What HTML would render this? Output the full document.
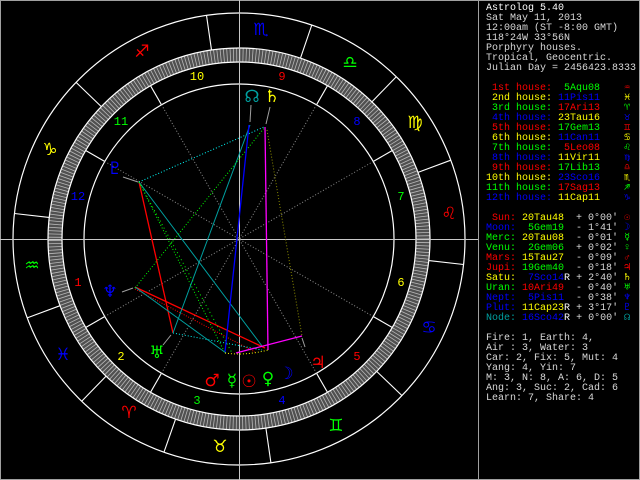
<!DOCTYPE html>
<html><head><meta charset="utf-8"><style>
html,body{margin:0;padding:0;background:#000;}
#w{position:relative;width:640px;height:480px;overflow:hidden;background:#000;}
svg{position:absolute;left:0;top:0;}
pre{position:absolute;left:486px;top:4px;margin:0;font-family:"Liberation Mono","DejaVu Sans Mono",monospace;font-size:10px;line-height:10px;color:#d8d8d8;}
.r{color:#f00}.y{color:#ff0}.g{color:#0f0}.b{color:#00f}.t{color:#00a0a0}.w{color:#fff}
</style></head><body><div id="w">
<svg width="640" height="480" viewBox="0 0 640 480" font-family="DejaVu Sans, sans-serif">
<rect x="0.5" y="0.5" width="639" height="479" fill="none" stroke="#a0a0a0"/>
<line x1="478.5" y1="0" x2="478.5" y2="480" stroke="#a0a0a0"/>
<g fill="none" stroke="#fff" stroke-width="1.2">
<circle cx="239" cy="239" r="226"/>
<circle cx="239" cy="239" r="155"/>
</g>
<circle cx="239" cy="239" r="184" fill="none" stroke="#505050" stroke-width="14"/>
<circle cx="239" cy="239" r="184" fill="none" stroke="#b8b8b8" stroke-width="13" stroke-dasharray="0.8 2.4"/>
<circle cx="239" cy="239" r="177" fill="none" stroke="#fff" stroke-width="1.2"/>
<circle cx="239" cy="239" r="191" fill="none" stroke="#fff" stroke-width="1.2"/>
<line x1="0" y1="239.5" x2="478" y2="239.5" stroke="#c8c8c8"/>
<line x1="239.5" y1="0" x2="239.5" y2="480" stroke="#c8c8c8"/>
<g stroke="#fff" stroke-width="1.1">
<line x1="373.2" y1="161.5" x2="392.3" y2="150.5"/>
<line x1="316.5" y1="104.8" x2="327.5" y2="85.7"/>
<line x1="161.5" y1="104.8" x2="150.5" y2="85.7"/>
<line x1="104.8" y1="161.5" x2="85.7" y2="150.5"/>
<line x1="104.8" y1="316.5" x2="85.7" y2="327.5"/>
<line x1="161.5" y1="373.2" x2="150.5" y2="392.3"/>
<line x1="316.5" y1="373.2" x2="327.5" y2="392.3"/>
<line x1="373.2" y1="316.5" x2="392.3" y2="327.5"/>
<line x1="106.1" y1="376.1" x2="81.7" y2="401.3"/>
<line x1="175.6" y1="419.1" x2="164" y2="452.1"/>
<line x1="265.9" y1="428.1" x2="270.9" y2="462.7"/>
<line x1="376.7" y1="371.4" x2="402" y2="395.6"/>
<line x1="428.8" y1="260.6" x2="463.6" y2="264.5"/>
<line x1="418" y1="172.4" x2="450.8" y2="160.2"/>
<line x1="371.9" y1="101.9" x2="396.3" y2="76.7"/>
<line x1="300.5" y1="58.1" x2="311.8" y2="25"/>
<line x1="211.5" y1="50" x2="206.5" y2="15.3"/>
<line x1="101.3" y1="106.6" x2="76.1" y2="82.4"/>
<line x1="49.1" y1="217.4" x2="14.4" y2="213.5"/>
<line x1="60" y1="305.7" x2="27.2" y2="317.9"/>
</g>
<g stroke="#909090" stroke-dasharray="1 2">
<line x1="373.2" y1="161.5" x2="104.8" y2="316.5"/>
<line x1="316.5" y1="104.8" x2="161.5" y2="373.2"/>
<line x1="161.5" y1="104.8" x2="316.5" y2="373.2"/>
<line x1="104.8" y1="161.5" x2="373.2" y2="316.5"/>
</g>
<g fill="none">
<line x1="139" y1="182" x2="173" y2="333" stroke="#f00" stroke-width="1.3"/>
<line x1="135" y1="287" x2="265" y2="348" stroke="#f00" stroke-width="1.3"/>
<line x1="135" y1="289" x2="255" y2="352" stroke="#f00" stroke-dasharray="1 1.5"/>
<line x1="139" y1="182" x2="264" y2="127" stroke="#0ff" stroke-dasharray="1 2"/>
<line x1="173" y1="333" x2="262" y2="350" stroke="#0ff" stroke-dasharray="1 2"/>
<line x1="139" y1="182" x2="262" y2="346" stroke="#00a0a0"/>
<line x1="135" y1="287" x2="226" y2="353" stroke="#00a0a0"/>
<line x1="250" y1="125" x2="173" y2="333" stroke="#00a0a0"/>
<line x1="139" y1="182" x2="225" y2="353" stroke="#0f0" stroke-dasharray="1 2"/>
<line x1="135" y1="288" x2="265" y2="127" stroke="#0f0" stroke-dasharray="1 2"/>
<line x1="139" y1="182" x2="232" y2="353" stroke="#0f0" stroke-dasharray="1 3"/>
<line x1="249" y1="125" x2="225" y2="352" stroke="#00f" stroke-width="1.3"/>
<line x1="265" y1="127" x2="268" y2="350" stroke="#f0f" stroke-width="1.3"/>
<line x1="236" y1="353" x2="302" y2="336" stroke="#f0f" stroke-width="1.3"/>
<line x1="267" y1="130" x2="302" y2="336" stroke="#909000" stroke-dasharray="1 2"/>
<path d="M225 353 Q245 356 268 350" stroke="#ff0" stroke-dasharray="1 2"/>
</g>
<g stroke="#a0a0a0">
<line x1="123" y1="177" x2="138" y2="182"/>
<line x1="122" y1="292" x2="133" y2="288"/>
<line x1="163" y1="345" x2="171" y2="335"/>
<line x1="251" y1="105" x2="250" y2="122"/>
<line x1="270" y1="107" x2="266" y2="124"/>
<line x1="305" y1="347" x2="302" y2="338"/>
</g>
<g font-size="17" text-anchor="middle" dominant-baseline="central">
<text x="129" y="413" fill="#f00">♈</text>
<text x="220" y="447" fill="#ff0">♉</text>
<text x="336" y="426" fill="#0f0">♊</text>
<text x="429" y="328" fill="#00f">♋</text>
<text x="449" y="214" fill="#f00">♌</text>
<text x="415" y="123" fill="#ff0">♍</text>
<text x="350" y="63" fill="#0f0">♎</text>
<text x="261" y="30" fill="#00f">♏</text>
<text x="142" y="52" fill="#f00">♐</text>
<text x="50" y="150" fill="#ff0">♑</text>
<text x="32" y="266" fill="#0f0">♒</text>
<text x="63" y="355" fill="#00f">♓</text>
</g>
<g font-family="Liberation Mono, monospace" font-size="12" text-anchor="middle" dominant-baseline="central">
<text x="78" y="283" fill="#f00">1</text>
<text x="121" y="357" fill="#ff0">2</text>
<text x="197" y="401" fill="#0f0">3</text>
<text x="282" y="401" fill="#00f">4</text>
<text x="357" y="357" fill="#f00">5</text>
<text x="401" y="283" fill="#ff0">6</text>
<text x="401" y="197" fill="#0f0">7</text>
<text x="357" y="122" fill="#00f">8</text>
<text x="282" y="77" fill="#f00">9</text>
<text x="197" y="77" fill="#ff0">10</text>
<text x="121" y="122" fill="#0f0">11</text>
<text x="78" y="197" fill="#00f">12</text>
</g>
<g font-size="17" text-anchor="middle" dominant-baseline="central">
<text x="115" y="169" fill="#00f">♇</text>
<text x="110" y="292" fill="#00f">♆</text>
<text x="157" y="353" fill="#0f0">♅</text>
<text x="212" y="381" fill="#f00">♂</text>
<text x="232" y="381" fill="#0f0">☿</text>
<text x="249" y="382" fill="#f00">☉</text>
<text x="268" y="379" fill="#0f0">♀</text>
<text x="286" y="374" fill="#00f">☽</text>
<text x="318" y="363" fill="#f00">♃</text>
<text x="252" y="97" fill="#00a0a0">☊</text>
<text x="272" y="97" fill="#ff0">♄</text>
</g>
</svg>
<pre><span class="w">Astrolog 5.40</span>
Sat May 11, 2013
12:00am (ST -8:00 GMT)
118°24W 33°56N
Porphyry houses.
Tropical, Geocentric.
Julian Day = 2456423.8333

<span class="r"> 1st house:</span>  <span class="g">5Aqu08</span>    <span class="r">♒</span>
<span class="y"> 2nd house:</span> <span class="b">11Pis11</span>    <span class="y">♓</span>
<span class="g"> 3rd house:</span> <span class="r">17Ari13</span>    <span class="g">♈</span>
<span class="b"> 4th house:</span> <span class="y">23Tau16</span>    <span class="b">♉</span>
<span class="r"> 5th house:</span> <span class="g">17Gem13</span>    <span class="r">♊</span>
<span class="y"> 6th house:</span> <span class="b">11Can11</span>    <span class="y">♋</span>
<span class="g"> 7th house:</span>  <span class="r">5Leo08</span>    <span class="g">♌</span>
<span class="b"> 8th house:</span> <span class="y">11Vir11</span>    <span class="b">♍</span>
<span class="r"> 9th house:</span> <span class="g">17Lib13</span>    <span class="r">♎</span>
<span class="y">10th house:</span> <span class="b">23Sco16</span>    <span class="y">♏</span>
<span class="g">11th house:</span> <span class="r">17Sag13</span>    <span class="g">♐</span>
<span class="b">12th house:</span> <span class="y">11Cap11</span>    <span class="b">♑</span>

<span class="r"> Sun:</span> <span class="y">20Tau48</span>  + 0°00' <span class="r">☉</span>
<span class="b">Moon:</span>  <span class="g">5Gem19</span>  - 1°41' <span class="b">☽</span>
<span class="g">Merc:</span> <span class="y">20Tau08</span>  - 0°01' <span class="g">☿</span>
<span class="g">Venu:</span>  <span class="g">2Gem06</span>  + 0°02' <span class="g">♀</span>
<span class="r">Mars:</span> <span class="y">15Tau27</span>  - 0°09' <span class="r">♂</span>
<span class="r">Jupi:</span> <span class="g">19Gem40</span>  - 0°18' <span class="r">♃</span>
<span class="y">Satu:</span>  <span class="b">7Sco14</span><span class="w">R</span> + 2°40' <span class="y">♄</span>
<span class="g">Uran:</span> <span class="r">10Ari49</span>  - 0°40' <span class="g">♅</span>
<span class="b">Nept:</span>  <span class="b">5Pis11</span>  - 0°38' <span class="b">♆</span>
<span class="b">Plut:</span> <span class="y">11Cap23</span><span class="w">R</span> + 3°17' <span class="b">♇</span>
<span class="t">Node:</span> <span class="b">16Sco42</span><span class="w">R</span> + 0°00' <span class="t">☊</span>

Fire: 1, Earth: 4,
Air : 3, Water: 3
Car: 2, Fix: 5, Mut: 4
Yang: 4, Yin: 7
M: 3, N: 8, A: 6, D: 5
Ang: 3, Suc: 2, Cad: 6
Learn: 7, Share: 4</pre>
</div></body></html>
